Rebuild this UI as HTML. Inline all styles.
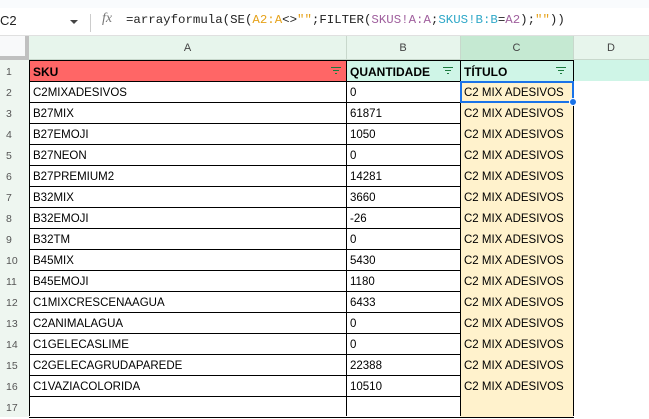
<!DOCTYPE html>
<html><head><meta charset="utf-8"><style>
*{margin:0;padding:0;box-sizing:border-box}
body{width:649px;height:416px;overflow:hidden;background:#fff;font-family:"Liberation Sans",Arial,sans-serif;position:relative}
.a{position:absolute}
.c{position:absolute;font-size:11.5px;color:#000;line-height:21px;padding-left:4px;padding-top:2px;white-space:nowrap;overflow:hidden}
.rn{position:absolute;left:0;width:29px;font-size:10.5px;color:#555;line-height:21px;padding-left:6px;padding-top:2px;background:#eef6f0}
.fm{font-family:"Liberation Mono",monospace;font-size:12.4px}
</style></head><body>
<div class="a" style="left:0;top:0;width:649px;height:8px;background:#f9fbfd"></div>
<div class="a" style="left:0;top:8px;width:649px;height:28px;background:#fff;border-bottom:1px solid #e0e0e0"></div>
<div class="a" style="left:0;top:13px;font-size:13px;color:#222">C2</div>
<div class="a" style="left:70px;top:20px;width:0;height:0;border-left:4px solid transparent;border-right:4px solid transparent;border-top:4px solid #444"></div>
<div class="a" style="left:90px;top:14px;width:1px;height:18px;background:#ccc"></div>
<div class="a" style="left:102px;top:11px;font-size:14px;color:#777;font-style:italic;font-family:'Liberation Serif',serif">fx</div>
<div class="a fm" style="left:126px;top:13px;color:#222">=arrayformula(SE(<span style="color:#e6a21a">A2:A</span>&lt;&gt;<span style="color:#e6a21a">""</span>;FILTER(<span style="color:#a0609e">SKUS!A:A</span>;<span style="color:#2fa8c8">SKUS!B:B</span>=<span style="color:#a0609e">A2</span>);<span style="color:#e6a21a">""</span>))</div>
<div class="a" style="left:0;top:36px;width:29px;height:24px;background:#f8f9fa;border-right:4px solid #c0c0c0;border-bottom:4px solid #c0c0c0"></div>
<div class="a" style="left:29px;top:36px;width:620px;height:24px;background:#e7f5ec;border-bottom:1px solid #c8d8cc"></div>
<div class="a" style="left:460px;top:36px;width:113px;height:24px;background:#c5e9d2"></div>
<div class="a" style="left:346px;top:36px;width:1px;height:24px;background:#c8d8cc"></div>
<div class="a" style="left:460px;top:36px;width:1px;height:24px;background:#c8d8cc"></div>
<div class="a" style="left:573px;top:36px;width:1px;height:24px;background:#c8d8cc"></div>
<div class="a" style="left:29px;top:42px;width:317px;text-align:center;font-size:11px;color:#444">A</div>
<div class="a" style="left:346px;top:42px;width:114px;text-align:center;font-size:11px;color:#444">B</div>
<div class="a" style="left:460px;top:42px;width:113px;text-align:center;font-size:11px;color:#444">C</div>
<div class="a" style="left:573px;top:42px;width:76px;text-align:center;font-size:11px;color:#444">D</div>
<div class="a" style="left:29px;top:60px;width:317px;height:21px;background:#ff6666"></div>
<div class="a" style="left:346px;top:60px;width:303px;height:21px;background:#cff5e7"></div>
<div id="rows"></div>
<script>
var d=[["SKU","QUANTIDADE","TÍTULO"],["C2MIXADESIVOS","0"],["B27MIX","61871"],["B27EMOJI","1050"],["B27NEON","0"],["B27PREMIUM2","14281"],["B32MIX","3660"],["B32EMOJI","-26"],["B32TM","0"],["B45MIX","5430"],["B45EMOJI","1180"],["C1MIXCRESCENAAGUA","6433"],["C2ANIMALAGUA","0"],["C1GELECASLIME","0"],["C2GELECAGRUDAPAREDE","22388"],["C1VAZIACOLORIDA","10510"],["",""]];
var h="";
for(var i=0;i<17;i++){var y=60+21*i;
h+='<div class="rn" style="top:'+y+'px;height:21px">'+(i+1)+'</div>';
if(i>0)h+='<div class="a" style="left:460px;top:'+y+'px;width:113px;height:21px;background:#fff2cc"></div>';
var b=i==0?'font-weight:bold;font-size:12px;':'';
h+='<div class="c" style="left:29px;top:'+y+'px;width:317px;height:21px;'+b+'">'+d[i][0]+'</div>';
h+='<div class="c" style="left:346px;top:'+y+'px;width:114px;height:21px;'+b+'">'+d[i][1]+'</div>';
if(i<16)h+='<div class="c" style="left:460px;top:'+y+'px;width:113px;height:21px;'+b+'">'+(i==0?'TÍTULO':'C2 MIX ADESIVOS')+'</div>';
h+='<div class="a" style="left:29px;top:'+(y+21)+'px;width:545px;height:1px;background:#000"></div>';
}
h+='<div class="a" style="left:29px;top:60px;width:545px;height:1px;background:#000"></div>';
[29,346,460,573].forEach(function(x){h+='<div class="a" style="left:'+x+'px;top:60px;width:1px;height:356px;background:#000"></div>';});
[331,443,556].forEach(function(X){h+='<div class="a" style="left:'+X+'px;top:67px;width:10px;height:1px;background:#1b7a3e"></div><div class="a" style="left:'+(X+2)+'px;top:70px;width:6px;height:1px;background:#1b7a3e"></div><div class="a" style="left:'+(X+4)+'px;top:73px;width:2px;height:1px;background:#1b7a3e"></div>';});
h+='<div class="a" style="left:460px;top:81px;width:114px;height:22px;border:2px solid #1a73e8"></div>';
h+='<div class="a" style="left:569px;top:98px;width:8px;height:8px;border-radius:50%;background:#1a73e8;border:1px solid #fff"></div>';
document.getElementById("rows").innerHTML=h;
</script>
</body></html>
